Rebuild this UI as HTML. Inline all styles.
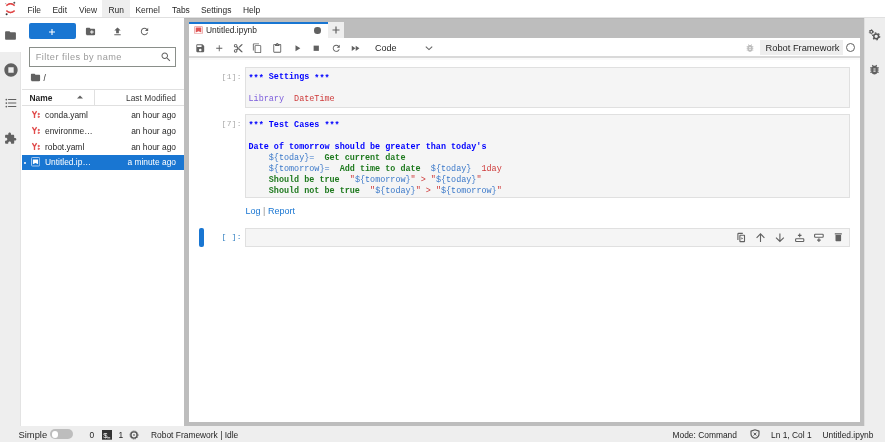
<!DOCTYPE html>
<html><head><meta charset="utf-8">
<style>
*{box-sizing:border-box;margin:0;padding:0}
html,body{width:885px;height:442px;overflow:hidden;background:#fff}
body{will-change:transform;font-family:"Liberation Sans",sans-serif;font-size:8.42px;color:rgba(0,0,0,0.87);position:relative}
.a{position:absolute}
svg{display:block}
.mono{font-family:"Liberation Mono",monospace}
.t{white-space:pre;line-height:1}
.st{position:relative;top:1.5px}
</style></head><body>

<!-- menu bar -->
<div class="a" style="left:0;top:0;width:885px;height:18px;background:#fff;border-bottom:1px solid #e0e0e0"></div>

<!-- logo -->
<svg class="a" style="left:0;top:0" width="20" height="17" viewBox="0 0 20 17">
  <path d="M6.3 5.6 Q10.5 1.9 14.7 5.6" stroke="#e04646" stroke-width="1.4" fill="none"/><path d="M7.5 4.4 Q10.5 1.6 13.5 4.4 Q10.5 3.4 7.5 4.4Z" fill="#e04646"/>
  <path d="M6.3 10.6 Q10.5 14.3 14.7 10.6" stroke="#e04646" stroke-width="1.4" fill="none"/><path d="M7.5 11.8 Q10.5 14.6 13.5 11.8 Q10.5 12.8 7.5 11.8Z" fill="#e04646"/>
  <circle cx="14.3" cy="2.7" r="1" fill="#555"/>
  <circle cx="5.7" cy="3.6" r="0.7" fill="#aaa"/>
  <circle cx="6.6" cy="14.2" r="1" fill="#333"/>
</svg>
<div class="a" style="left:102px;top:0;width:28px;height:17px;background:#eeeeee"></div>
<div class="a t" style="left:27.4px;top:6px">File</div>
<div class="a t" style="left:52.5px;top:6px">Edit</div>
<div class="a t" style="left:79px;top:6px">View</div>
<div class="a t" style="left:108.5px;top:6px">Run</div>
<div class="a t" style="left:135.5px;top:6px">Kernel</div>
<div class="a t" style="left:172px;top:6px">Tabs</div>
<div class="a t" style="left:201px;top:6px">Settings</div>
<div class="a t" style="left:243px;top:6px">Help</div>

<!-- left sidebar strip -->
<div class="a" style="left:0;top:18px;width:21px;height:408px;background:#eeeeee;border-right:1px solid #e3e3e3"></div>
<div class="a" style="left:0;top:18px;width:21px;height:34px;background:#fff"></div>
<svg class="a" style="left:3.9px;top:28.9px" width="13" height="13" viewBox="0 0 24 24"><path fill="#616161" d="M10 4H4c-1.1 0-1.99.9-1.99 2L2 18c0 1.1.9 2 2 2h16c1.1 0 2-.9 2-2V8c0-1.1-.9-2-2-2h-8l-2-2z"/></svg>
<svg class="a" style="left:2.75px;top:62px" width="16" height="16" viewBox="0 0 24 24"><path fill="#616161" d="M12 2C6.48 2 2 6.48 2 12s4.48 10 10 10 10-4.48 10-10S17.52 2 12 2zm4 14H8V8h8v8z"/></svg>
<svg class="a" style="left:3.95px;top:96.4px" width="14" height="14" viewBox="0 0 24 24"><path fill="#616161" d="M7,5H21V7H7V5M7,13V11H21V13H7M4,4.5A1.5,1.5 0 0,1 5.5,6A1.5,1.5 0 0,1 4,7.5A1.5,1.5 0 0,1 2.5,6A1.5,1.5 0 0,1 4,4.5M4,10.5A1.5,1.5 0 0,1 5.5,12A1.5,1.5 0 0,1 4,13.5A1.5,1.5 0 0,1 2.5,12A1.5,1.5 0 0,1 4,10.5M7,19V17H21V19H7M4,16.5A1.5,1.5 0 0,1 5.5,18A1.5,1.5 0 0,1 4,19.5A1.5,1.5 0 0,1 2.5,18A1.5,1.5 0 0,1 4,16.5Z"/></svg>
<svg class="a" style="left:3.7px;top:131.9px" width="12.9" height="12.9" viewBox="0 0 24 24"><path fill="#616161" d="M20.5 11H19V7c0-1.1-.9-2-2-2h-4V3.5C13 2.12 11.88 1 10.5 1S8 2.120 8 3.5V5H4c-1.1 0-1.99.9-1.99 2v3.8H3.5c1.49 0 2.7 1.21 2.7 2.7s-1.21 2.7-2.7 2.7H2V20c0 1.1.9 2 2 2h3.8v-1.5c0-1.49 1.21-2.7 2.7-2.7 1.49 0 2.7 1.21 2.7 2.7V22H17c1.1 0 2-.9 2-2v-4h1.5c1.38 0 2.5-1.12 2.5-2.5S21.88 11 20.5 11z"/></svg>

<!-- file browser -->
<div class="a" style="left:22px;top:18px;width:162px;height:408px;background:#fff"></div>
<div class="a" style="left:29px;top:23px;width:47px;height:16px;background:#1976d2;border-radius:2px"></div>
<svg class="a" style="left:48.3px;top:28px" width="8" height="8" viewBox="0 0 8 8"><path d="M4 1v6M1 4h6" stroke="#fff" stroke-width="1.1"/></svg>
<svg class="a" style="left:84.5px;top:26.1px" width="11" height="11" viewBox="0 0 24 24"><path fill="#616161" d="M20 6h-8l-2-2H4c-1.11 0-1.99.89-1.99 2L2 18c0 1.11.89 2 2 2h16c1.11 0 2-.89 2-2V8c0-1.11-.89-2-2-2zm-1 8h-3v3h-2v-3h-3v-2h3V9h2v3h3v2z"/></svg>
<svg class="a" style="left:112px;top:26.1px" width="11" height="11" viewBox="0 0 24 24"><path fill="#616161" d="M9 16h6v-6h4l-7-7-7 7h4zm-4 2h14v2H5z"/></svg>
<svg class="a" style="left:139px;top:26.1px" width="11" height="11" viewBox="0 0 24 24"><path fill="#616161" d="M17.65 6.35C16.2 4.9 14.21 4 12 4c-4.42 0-7.990 3.58-7.99 8s3.57 8 7.99 8c3.73 0 6.84-2.55 7.73-6h-2.08c-.82 2.33-3.04 4-5.65 4-3.31 0-6-2.69-6-6s2.69-6 6-6c1.66 0 3.14.69 4.22 1.78L13 11h7V4l-2.35 2.35z"/></svg>
<div class="a" style="left:29px;top:47px;width:147px;height:20px;border:1px solid #8a8f8a"></div>
<div class="a t" style="left:35.8px;top:53.1px;color:#9a9a9a;font-size:9.2px;letter-spacing:0.45px">Filter files by name</div>
<svg class="a" style="left:160px;top:51px" width="12" height="12" viewBox="0 0 24 24"><path fill="#616161" d="M15.5 14h-.79l-.28-.27C15.41 12.59 16 11.11 16 9.5 16 5.91 13.09 3 9.5 3S3 5.91 3 9.5 5.91 16 9.5 16c1.61 0 3.090-.59 4.23-1.57l.27.28v.79l5 4.99L20.49 19l-4.99-5zm-6 0C7.01 14 5 11.99 5 9.5S7.01 5 9.5 5 14 7.01 14 9.5 11.99 14 9.5 14z"/></svg>
<svg class="a" style="left:30px;top:72.4px" width="11" height="11" viewBox="0 0 24 24"><path fill="#616161" d="M10 4H4c-1.1 0-1.99.9-1.99 2L2 18c0 1.1.9 2 2 2h16c1.1 0 2-.9 2-2V8c0-1.1-.9-2-2-2h-8l-2-2z"/></svg>
<div class="a t" style="left:43.5px;top:73.5px">/</div>

<!-- listing header -->
<div class="a" style="left:22px;top:89px;width:162px;height:17px;border-top:1px solid #e0e0e0;border-bottom:1px solid #e0e0e0"></div>
<div class="a" style="left:94px;top:90px;width:1px;height:15px;background:#e0e0e0"></div>
<div class="a t" style="left:29.5px;top:93.5px;font-weight:bold">Name</div>
<svg class="a" style="left:76px;top:94px" width="8" height="6" viewBox="0 0 8 6"><path d="M1 4.5L4 1.5 7 4.5z" fill="#616161"/></svg>
<div class="a t" style="left:100px;top:93.5px;width:76px;text-align:right;color:rgba(0,0,0,0.8)">Last Modified</div>

<!-- rows -->
<div class="a" style="left:22px;top:154.5px;width:162px;height:15.5px;background:#1976d2"></div>
<svg class="a" style="left:31px;top:110px" width="10" height="9" viewBox="0 0 10 9"><path d="M1.4 1.2L3.5 4.6 5.6 1.2M3.5 4.6V8" stroke="#e04a4a" stroke-width="1.35" fill="none"/><path d="M7.1 3.1L9 4 7.1 4.9zM7.1 5.9L9 6.8 7.1 7.7z" fill="#e04a4a" stroke="#e04a4a" stroke-width="0.5"/></svg>
<div class="a t" style="left:45px;top:110.5px">conda.yaml</div>
<div class="a t" style="left:100px;top:110.5px;width:76px;text-align:right">an hour ago</div>
<svg class="a" style="left:31px;top:126px" width="10" height="9" viewBox="0 0 10 9"><path d="M1.4 1.2L3.5 4.6 5.6 1.2M3.5 4.6V8" stroke="#e04a4a" stroke-width="1.35" fill="none"/><path d="M7.1 3.1L9 4 7.1 4.9zM7.1 5.9L9 6.8 7.1 7.7z" fill="#e04a4a" stroke="#e04a4a" stroke-width="0.5"/></svg>
<div class="a t" style="left:45px;top:126.5px">environme…</div>
<div class="a t" style="left:100px;top:126.5px;width:76px;text-align:right">an hour ago</div>
<svg class="a" style="left:31px;top:141.7px" width="10" height="9" viewBox="0 0 10 9"><path d="M1.4 1.2L3.5 4.6 5.6 1.2M3.5 4.6V8" stroke="#e04a4a" stroke-width="1.35" fill="none"/><path d="M7.1 3.1L9 4 7.1 4.9zM7.1 5.9L9 6.8 7.1 7.7z" fill="#e04a4a" stroke="#e04a4a" stroke-width="0.5"/></svg>
<div class="a t" style="left:45px;top:142.8px">robot.yaml</div>
<div class="a t" style="left:100px;top:142.8px;width:76px;text-align:right">an hour ago</div>
<div class="a" style="left:24.4px;top:161.7px;width:2px;height:2px;background:#fff;border-radius:1px"></div>
<svg class="a" style="left:31.1px;top:157.3px" width="9.2" height="9.5" viewBox="0 0 9.2 9.5"><rect x="0.5" y="0.5" width="8.2" height="8.5" rx="0.8" fill="none" stroke="#a9cbf2" stroke-width="1"/><path d="M1.9 2.6H7.1V7.3L4.5 6.1 1.9 7.3z" fill="#fff"/></svg>
<div class="a t" style="left:45px;top:158.4px;color:#fff">Untitled.ip…</div>
<div class="a t" style="left:100px;top:158.4px;width:76px;text-align:right;color:#fff">a minute ago</div>

<!-- dock gray -->
<div class="a" style="left:184px;top:18px;width:680px;height:408px;background:#bdbdbd;border-top:1px solid #b6b6b6"></div>
<!-- right sidebar -->
<div class="a" style="left:864px;top:18px;width:21px;height:408px;background:#eeeeee;border-left:1px solid #e0e0e0"></div>

<!-- notebook tab -->
<div class="a" style="left:189px;top:22px;width:139px;height:16px;background:#fff"></div><div class="a" style="left:189px;top:22px;width:139px;height:1.6px;background:#1976d2"></div>
<div class="a" style="left:328px;top:22px;width:16px;height:16px;background:#eeeeee"></div>
<svg class="a" style="left:332px;top:26px" width="8" height="8" viewBox="0 0 8 8"><path d="M4 0.5v7M0.5 4h7" stroke="#616161" stroke-width="1.2"/></svg>
<svg class="a" style="left:194.2px;top:25.8px" width="9" height="8.2" viewBox="0 0 9 8.2"><rect x="0.45" y="0.45" width="8.1" height="7.3" rx="0.6" fill="none" stroke="#eaa5a5" stroke-width="0.9"/><path d="M1.7 1.5H7.3V6.4L4.5 5.3 1.7 6.4z" fill="#e05555"/></svg>
<div class="a t" style="left:206px;top:26.4px">Untitled.ipynb</div>
<div class="a" style="left:314px;top:27px;width:6.5px;height:6.5px;background:#616161;border-radius:50%"></div>

<!-- notebook panel -->
<div class="a" style="left:189px;top:38px;width:671px;height:384px;background:#fff"></div>
<div class="a" style="left:189px;top:56px;width:671px;height:2px;background:#d9d9d9"></div><div class="a" style="left:189px;top:58px;width:671px;height:2px;background:#fafafa"></div>

<!-- toolbar icons -->
<svg class="a" style="left:194.75px;top:42.75px" width="10.5" height="10.5" viewBox="0 0 24 24"><path fill="#616161" d="M17 3H5c-1.11 0-2 .9-2 2v14c0 1.1.89 2 2 2h14c1.1 0 2-.9 2-2V7l-4-4zm-5 16c-1.66 0-3-1.34-3-3s1.34-3 3-3 3 1.34 3 3-1.34 3-3 3zm3-10H5V5h10v4z"/></svg>
<svg class="a" style="left:213.75px;top:42.75px" width="10.5" height="10.5" viewBox="0 0 24 24"><path fill="#616161" d="M19 13h-6v6h-2v-6H5v-2h6V5h2v6h6v2z"/></svg>
<svg class="a" style="left:233.25px;top:42.75px" width="10.5" height="10.5" viewBox="0 0 24 24"><path fill="#616161" d="M9.64 7.64c.23-.5.36-1.05.36-1.64 0-2.21-1.79-4-4-4S2 3.79 2 6s1.79 4 4 4c.59 0 1.14-.13 1.64-.36L10 12l-2.36 2.36C7.14 14.13 6.59 14 6 14c-2.21 0-4 1.79-4 4s1.790 4 4 4 4-1.79 4-4c0-.59-.13-1.14-.36-1.64L12 14l7 7h3v-1L9.64 7.64zM6 8c-1.1 0-2-.89-2-2s.9-2 2-2 2 .89 2 2-.9 2-2 2zm0 12c-1.1 0-2-.89-2-2s.9-2 2-2 2 .89 2 2-.9 2-2 2zm6-7.5c-.28 0-.5-.22-.5-.5s.22-.5.5-.5.5.22.5.5-.22.5-.5.5zM19 3l-6 6 2 2 7-7V3z"/></svg>
<svg class="a" style="left:252.25px;top:42.75px" width="10.5" height="10.5" viewBox="0 0 24 24"><path fill="#616161" d="M16 1H4c-1.1 0-2 .9-2 2v14h2V3h12V1zm3 4H8c-1.1 0-2 .9-2 2v14c0 1.1.9 2 2 2h11c1.1 0 2-.9 2-2V7c0-1.1-.9-2-2-2zm0 16H8V7h11v14z"/></svg>
<svg class="a" style="left:272.25px;top:42.75px" width="10.5" height="10.5" viewBox="0 0 24 24"><path fill="#616161" d="M19 2h-4.18C14.4.84 13.3 0 12 0c-1.3 0-2.4.84-2.82 2H5c-1.1 0-2 .9-2 2v16c0 1.1.9 2 2 2h14c1.1 0 2-.9 2-2V4c0-1.1-.9-2-2-2zm-7 0c.55 0 1 .45 1 1s-.45 1-1 1-1-.45-1-1 .45-1 1-1zm7 18H5V4h2v3h10V4h2v16z"/></svg>
<svg class="a" style="left:292.25px;top:42.75px" width="10.5" height="10.5" viewBox="0 0 24 24"><path fill="#616161" d="M8 5v14l11-7z"/></svg>
<svg class="a" style="left:311.25px;top:42.75px" width="10.5" height="10.5" viewBox="0 0 24 24"><path fill="#616161" d="M6 6h12v12H6z"/></svg>
<svg class="a" style="left:330.75px;top:42.75px" width="10.5" height="10.5" viewBox="0 0 24 24"><path fill="#616161" d="M17.65 6.35C16.2 4.9 14.21 4 12 4c-4.42 0-7.99 3.58-7.99 8s3.57 8 7.99 8c3.73 0 6.84-2.55 7.73-6h-2.08c-.82 2.33-3.04 4-5.65 4-3.31 0-6-2.69-6-6s2.69-6 6-6c1.66 0 3.14.69 4.22 1.78L13 11h7V4l-2.35 2.35z"/></svg>
<svg class="a" style="left:349.75px;top:42.75px" width="10.5" height="10.5" viewBox="0 0 24 24"><path fill="#616161" d="M4 18l8.5-6L4 6v12zm9-12v12l8.5-6L13 6z"/></svg>
<div class="a t" style="left:375px;top:44.4px;font-size:9px">Code</div>
<svg class="a" style="left:422.5px;top:42.2px" width="12" height="12" viewBox="0 0 12 12"><path d="M2.8 4.6L6 7.6 9.2 4.6" stroke="#616161" stroke-width="1.05" fill="none"/></svg>

<svg class="a" style="left:744.5px;top:43px" width="10" height="10" viewBox="0 0 24 24"><path fill="#bdbdbd" d="M20 8h-2.81c-.45-.78-1.07-1.45-1.82-1.96L17 4.41 15.59 3l-2.17 2.17C12.96 5.06 12.49 5 12 5c-.49 0-.96.06-1.41.17L8.41 3 7 4.41l1.62 1.63C7.88 6.55 7.26 7.22 6.81 8H4v2h2.09c-.05.33-.09.66-.09 1v1H4v2h2v1c0 .34.04.67.09 1H4v2h2.81c1.04 1.79 2.970 3 5.19 3s4.15-1.21 5.19-3H20v-2h-2.09c.05-.33.09-.66.09-1v-1h2v-2h-2v-1c0-.34-.04-.67-.09-1H20V8zm-6 8h-4v-2h4v2zm0-4h-4v-2h4v2z"/></svg>
<div class="a" style="left:760px;top:40px;width:83px;height:14.5px;background:#eeeeee"></div>
<div class="a t" style="left:765.5px;top:43.7px;font-size:9.3px">Robot Framework</div>
<div class="a" style="left:846px;top:43.2px;width:9px;height:9px;border:1px solid #616161;border-radius:50%"></div>

<!-- cells -->
<div class="a t mono" style="left:221.6px;top:72.7px;color:#a9a9a9;font-size:7.9px;letter-spacing:0.35px">[1]:</div>
<div class="a" style="left:245px;top:67px;width:605px;height:40.5px;background:#f5f5f5;border:1px solid #e0e0e0"></div>
<div class="mono a" style="left:248.5px;top:72.1px;line-height:11px;white-space:pre;font-size:8.45px"><b style="color:#0000ff"><span class="st">***</span> Settings <span class="st">***</span></b>

<span style="color:#7b5bdb">Library</span>  <span style="color:#ce3b3b">DateTime</span></div>

<div class="a t mono" style="left:221.6px;top:119.7px;color:#a9a9a9;font-size:7.9px;letter-spacing:0.35px">[7]:</div>
<div class="a" style="left:245px;top:114.3px;width:605px;height:84.2px;background:#f5f5f5;border:1px solid #e0e0e0"></div>
<div class="mono a" style="left:248.5px;top:119.6px;line-height:11px;white-space:pre;font-size:8.45px"><b style="color:#0000ff"><span class="st">***</span> Test Cases <span class="st">***</span></b>

<b style="color:#0000ff">Date of tomorrow should be greater than today's</b>
    <span style="color:#3a78c9">${today}=</span>  <b style="color:#1f7a1f">Get current date</b>
    <span style="color:#3a78c9">${tomorrow}=</span>  <b style="color:#1f7a1f">Add time to date</b>  <span style="color:#3a78c9">${today}</span>  <span style="color:#ce3b3b">1day</span>
    <b style="color:#1f7a1f">Should be true</b>  <span style="color:#ce3b3b">"</span><span style="color:#3a78c9">${tomorrow}</span><span style="color:#ce3b3b">" &gt; "</span><span style="color:#3a78c9">${today}</span><span style="color:#ce3b3b">"</span>
    <b style="color:#1f7a1f">Should not be true</b>  <span style="color:#ce3b3b">"</span><span style="color:#3a78c9">${today}</span><span style="color:#ce3b3b">" &gt; "</span><span style="color:#3a78c9">${tomorrow}</span><span style="color:#ce3b3b">"</span></div>

<div class="a t" style="left:245.5px;top:206.5px;color:#1976d2;font-size:9px">Log <span style="color:#8f8f8f">|</span> Report</div>

<!-- active cell -->
<div class="a" style="left:198.7px;top:228px;width:5px;height:18.7px;background:#1976d2;border-radius:2px"></div>
<div class="a t mono" style="left:221.6px;top:233.2px;color:#307fc1;font-size:7.9px;letter-spacing:0.35px">[ ]:</div>
<div class="a" style="left:245px;top:228px;width:605px;height:18.5px;background:#f5f5f5;border:1px solid #e0e0e0"></div>
<svg class="a" style="left:730px;top:228px" width="60" height="20" viewBox="0 0 60 20">
<g stroke="#616161" stroke-width="1.1" fill="none">
<path d="M7.9 12 V6.1 Q7.9 5.4 8.6 5.4 H12.8"/>
<rect x="9.9" y="7.3" width="4.6" height="6.3" rx="0.3"/>
<path d="M26.6 9.8 L30.5 5.9 L34.4 9.8 M30.5 6.2 V13.9"/>
<path d="M46 9.6 L49.9 13.5 L53.8 9.6 M49.9 5.4 V13.2"/>
</g>
<path d="M11.4 9.2 L13.1 10.4 L11.4 11.6z" fill="#616161"/>
</svg>
<svg class="a" style="left:790px;top:228px" width="60" height="20" viewBox="0 0 60 20">
<g stroke="#616161" stroke-width="1.1" fill="none">
<rect x="5.6" y="10.7" width="8.2" height="2.8" rx="0.7" fill="#fff"/>
<path d="M9.7 5.6V9.2M7.9 7.4H11.5"/>
<rect x="24.6" y="6.3" width="8.6" height="2.9" rx="0.7" fill="#fff"/>
<path d="M28.9 10.3V13.9M27.1 12.1H30.7"/>
</g>
<path d="M44.8 5.2H51.8V6.4H44.8z M45.5 6.9H51.1V12.6Q51.1 13.3 50.4 13.3H46.2Q45.5 13.3 45.5 12.6z" fill="#616161"/>
</svg>
<!-- right sidebar icons -->
<svg class="a" style="left:868px;top:28px" width="14" height="14" viewBox="0 0 14 14"><g fill="none" stroke="#555"><circle cx="8.2" cy="8.3" r="2.4" stroke-width="1.5"/><circle cx="8.2" cy="8.3" r="3.5" stroke-width="1.3" stroke-dasharray="1.5 2.16"/><circle cx="3.3" cy="3.8" r="1.4" stroke-width="1.1"/><circle cx="3.3" cy="3.8" r="2.1" stroke-width="0.9" stroke-dasharray="1 1.2"/></g></svg>
<svg class="a" style="left:868px;top:63px" width="13" height="13" viewBox="0 0 24 24"><path fill="#616161" d="M20 8h-2.81c-.45-.78-1.07-1.45-1.82-1.96L17 4.41 15.59 3l-2.17 2.17C12.96 5.06 12.49 5 12 5c-.49 0-.96.06-1.41.17L8.41 3 7 4.41l1.62 1.63C7.88 6.55 7.26 7.22 6.81 8H4v2h2.09c-.05.33-.09.66-.09 1v1H4v2h2v1c0 .34.04.67.09 1H4v2h2.81c1.04 1.79 2.97 3 5.19 3s4.15-1.21 5.19-3H20v-2h-2.09c.05-.33.09-.66.09-1v-1h2v-2h-2v-1c0-.34-.04-.67-.09-1H20V8zm-6 8h-4v-2h4v2zm0-4h-4v-2h4v2z"/></svg>

<!-- status bar -->
<div class="a" style="left:0;top:426px;width:885px;height:16px;background:#eeeeee"></div>
<div class="a t" style="left:18.5px;top:430.3px;font-size:9.4px;color:rgba(0,0,0,0.85)">Simple</div>
<div class="a" style="left:50.3px;top:429.2px;width:22.4px;height:9.8px;background:#bdbdbd;border-radius:5px"></div>
<div class="a" style="left:51.6px;top:431px;width:6.6px;height:6.6px;background:#fff;border-radius:50%"></div>
<div class="a t" style="left:89.5px;top:430.5px">0</div>
<svg class="a" style="left:102px;top:430.3px" width="10" height="9.7" viewBox="0 0 10 9.7"><rect width="10" height="9.7" fill="#333"/><text x="1.3" y="7.6" font-family="Liberation Sans" font-size="7.6" fill="#fff">$</text><rect x="5.2" y="7.4" width="3" height="0.9" fill="#fff"/></svg>
<div class="a t" style="left:118.5px;top:430.5px">1</div>
<svg class="a" style="left:129.2px;top:429.5px" width="10" height="10" viewBox="0 0 10 10"><circle cx="5" cy="5" r="3.1" fill="none" stroke="#555" stroke-width="1.4"/><circle cx="5" cy="5" r="4" fill="none" stroke="#555" stroke-width="0.9" stroke-dasharray="1.2 0.9"/><circle cx="5" cy="5" r="0.9" fill="#777"/></svg>
<div class="a t" style="left:151px;top:430.5px">Robot Framework | Idle</div>
<div class="a t" style="left:672.5px;top:430.5px">Mode: Command</div>
<svg class="a" style="left:750px;top:428.8px" width="10" height="10" viewBox="0 0 10 10"><path d="M5 0.8L9 2.1V4.9C9 7.1 7.3 8.6 5 9.3 2.7 8.6 1 7.1 1 4.9V2.1z" fill="none" stroke="#555" stroke-width="1.15" stroke-linejoin="round"/><path d="M3.6 3.7L6.4 6.5M6.4 3.7L3.6 6.5" stroke="#555" stroke-width="1"/></svg>
<div class="a t" style="left:771px;top:430.5px">Ln 1, Col 1</div>
<div class="a t" style="left:822.5px;top:430.5px">Untitled.ipynb</div>

</body></html>
